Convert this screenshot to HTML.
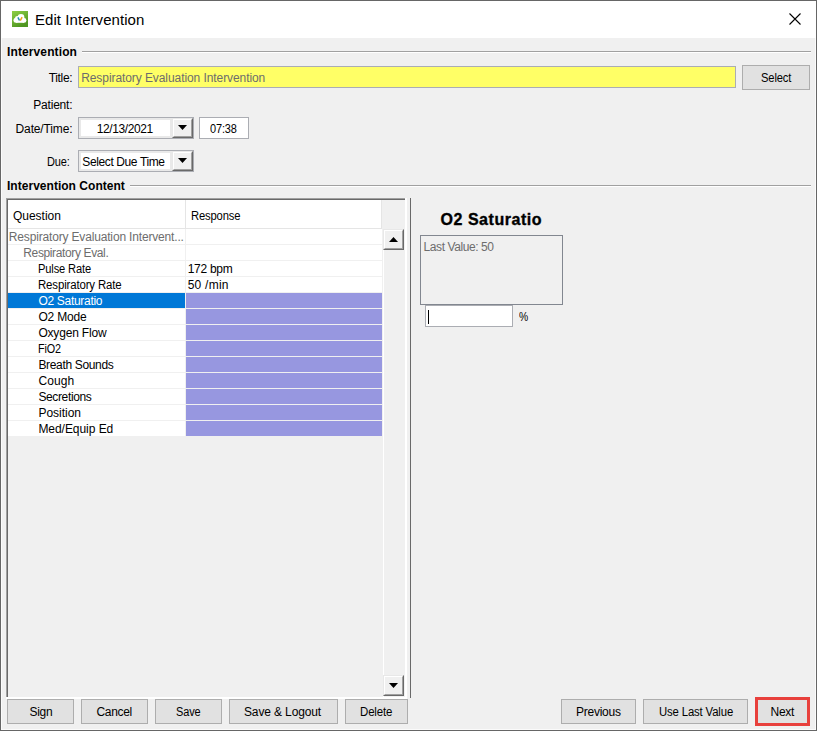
<!DOCTYPE html>
<html><head><meta charset="utf-8"><title>Edit Intervention</title>
<style>
html,body{margin:0;padding:0}
body{width:817px;height:731px;position:relative;overflow:hidden;background:#f0f0f0;font-family:"Liberation Sans",sans-serif;font-size:12px}
.a{position:absolute;box-sizing:border-box}
.t{position:absolute;white-space:nowrap;line-height:20px;height:20px}
.btn{position:absolute;box-sizing:border-box;background:#e1e1e1;border:1px solid #adadad}
.combo{position:absolute;box-sizing:border-box;border:1px solid #abadb3;background:#e9e9e9}
.combo .f{position:absolute;left:2px;top:2px;right:23px;bottom:2px;background:#fff}
.cbtn{position:absolute;box-sizing:border-box;background:#f0f0f0;border-top:1px solid #e8e8e8;border-left:1px solid #e8e8e8;border-right:1px solid #696969;border-bottom:1px solid #696969}
.cbtn:before{content:"";position:absolute;left:0;top:0;right:0;bottom:0;border-top:1px solid #fff;border-left:1px solid #fff;border-right:1px solid #a0a0a0;border-bottom:1px solid #a0a0a0}
.hl{position:absolute;height:1px;background:#f0f0f0}
</style></head><body>
<!-- title bar -->
<div class="a" style="left:0;top:0;width:817px;height:38px;background:#fff"></div>
<!-- app icon -->
<svg class="a" style="left:12px;top:11px" width="16" height="16" viewBox="0 0 16 16">
<defs><linearGradient id="g" x1="0" y1="0" x2="0.5" y2="1"><stop offset="0" stop-color="#8fd045"/><stop offset="1" stop-color="#4f9621"/></linearGradient></defs>
<rect width="16" height="16" fill="url(#g)"/>
<g fill="#fff"><circle cx="9" cy="6.4" r="3.4"/><circle cx="5.4" cy="7.3" r="2.4"/><circle cx="4" cy="9.3" r="2.5"/><circle cx="12" cy="9.4" r="2.4"/><rect x="4" y="7" width="8" height="4.8"/></g>
<path d="M5.9 6.3L7.5 9.5" stroke="#2190a8" stroke-width="1.5" fill="none"/>
<path d="M10.1 6.2L8.3 9.6" stroke="#f3a21e" stroke-width="1.5" fill="none"/>
</svg>
<!-- close X -->
<svg class="a" style="left:788px;top:12px" width="14" height="14" viewBox="0 0 14 14"><path d="M1.5 1.5l11 11M12.5 1.5l-11 11" stroke="#000" stroke-width="1.1" fill="none"/></svg>

<!-- group separators -->
<div class="a" style="left:82px;top:51px;width:729px;height:1px;background:#a0a0a0"></div>
<div class="a" style="left:82px;top:52px;width:729px;height:1px;background:#fff"></div>
<div class="a" style="left:130px;top:185px;width:681px;height:1px;background:#a0a0a0"></div>
<div class="a" style="left:130px;top:186px;width:681px;height:1px;background:#fff"></div>

<!-- title field -->
<div class="a" style="left:78px;top:66px;width:658px;height:22px;background:#ffff66;border:1px solid #abadb3"></div>
<div class="btn" style="left:742px;top:65px;width:68px;height:25px"></div>

<!-- date combo -->
<div class="combo" style="left:78px;top:117px;width:116px;height:22px"><div class="f"></div><div class="cbtn" style="right:0px;top:0px;width:21px;height:20px"></div></div>
<div class="a" style="left:199px;top:117px;width:50px;height:22px;background:#fff;border:1px solid #abadb3"></div>
<!-- due combo -->
<div class="combo" style="left:78px;top:150px;width:116px;height:22px"><div class="f"></div><div class="cbtn" style="right:0px;top:0px;width:21px;height:20px"></div></div>
<svg class="a" style="left:0;top:0" width="817" height="731"><polygon points="178.0,125 187.0,125 182.5,130" fill="#000"/></svg>
<svg class="a" style="left:0;top:0" width="817" height="731"><polygon points="178.0,158 187.0,158 182.5,163" fill="#000"/></svg>

<!-- table -->
<div class="a" style="left:6px;top:198px;width:399px;height:1px;background:#a0a0a0"></div>
<div class="a" style="left:6px;top:198px;width:1px;height:499px;background:#a0a0a0"></div>
<div class="a" style="left:7px;top:199px;width:398px;height:1px;background:#696969"></div>
<div class="a" style="left:7px;top:199px;width:1px;height:498px;background:#696969"></div>
<div class="a" style="left:405px;top:198px;width:2px;height:501px;background:#fff"></div>
<div class="a" style="left:6px;top:697px;width:401px;height:2px;background:#fff"></div>
<!-- white area: header + rows -->
<div class="a" style="left:8px;top:200px;width:374px;height:237px;background:#fff"></div>
<div class="a" style="left:8px;top:228px;width:374px;height:1px;background:#e5e5e5"></div>
<div class="a" style="left:185px;top:200px;width:1px;height:28px;background:#e5e5e5"></div>
<div class="a" style="left:381px;top:200px;width:1px;height:29px;background:#e5e5e5"></div>
<div class="a" style="left:185px;top:229px;width:1px;height:208px;background:#f0f0f0"></div>
<div class="hl" style="left:8px;width:374px;top:244px"></div>
<div class="hl" style="left:8px;width:374px;top:260px"></div>
<div class="hl" style="left:8px;width:374px;top:276px"></div>
<div class="hl" style="left:8px;width:374px;top:292px"></div>
<div class="hl" style="left:8px;width:374px;top:308px"></div>
<div class="hl" style="left:8px;width:374px;top:324px"></div>
<div class="hl" style="left:8px;width:374px;top:340px"></div>
<div class="hl" style="left:8px;width:374px;top:356px"></div>
<div class="hl" style="left:8px;width:374px;top:372px"></div>
<div class="hl" style="left:8px;width:374px;top:388px"></div>
<div class="hl" style="left:8px;width:374px;top:404px"></div>
<div class="hl" style="left:8px;width:374px;top:420px"></div>
<div class="hl" style="left:8px;width:374px;top:436px"></div>
<div class="a" style="left:186px;width:196px;top:293px;height:15px;background:#9797e0"></div>
<div class="a" style="left:186px;width:196px;top:309px;height:15px;background:#9797e0"></div>
<div class="a" style="left:186px;width:196px;top:325px;height:15px;background:#9797e0"></div>
<div class="a" style="left:186px;width:196px;top:341px;height:15px;background:#9797e0"></div>
<div class="a" style="left:186px;width:196px;top:357px;height:15px;background:#9797e0"></div>
<div class="a" style="left:186px;width:196px;top:373px;height:15px;background:#9797e0"></div>
<div class="a" style="left:186px;width:196px;top:389px;height:15px;background:#9797e0"></div>
<div class="a" style="left:186px;width:196px;top:405px;height:15px;background:#9797e0"></div>
<div class="a" style="left:186px;width:196px;top:421px;height:15px;background:#9797e0"></div>
<div class="a" style="left:8px;width:177px;top:293px;height:15px;background:#0078d7"></div>
<!-- scrollbar -->
<div class="a" style="left:383px;top:229px;width:1px;height:468px;background:#fff"></div>
<div class="cbtn" style="left:383px;top:229px;width:21px;height:21px"></div>
<div class="cbtn" style="left:383px;top:675px;width:21px;height:21px"></div>
<svg class="a" style="left:0;top:0" width="817" height="731"><polygon points="389.0,242 398.0,242 393.5,237" fill="#000"/></svg>
<svg class="a" style="left:0;top:0" width="817" height="731"><polygon points="389.0,683 398.0,683 393.5,688" fill="#000"/></svg>
<!-- splitter -->
<div class="a" style="left:410px;top:198px;width:1px;height:500px;background:#696969"></div>

<!-- right panel -->
<div class="a" style="left:420px;top:235px;width:143px;height:70px;border:1px solid #828790"></div>
<div class="a" style="left:425px;top:305px;width:88px;height:22px;background:#fff;border:1px solid #abadb3"></div>
<div class="a" style="left:428px;top:310px;width:1px;height:14px;background:#000"></div>

<!-- bottom buttons -->
<div class="btn" style="left:7px;top:699px;width:67px;height:25px"></div>
<div class="btn" style="left:81px;top:699px;width:67px;height:25px"></div>
<div class="btn" style="left:155px;top:699px;width:67px;height:25px"></div>
<div class="btn" style="left:229px;top:699px;width:109px;height:25px"></div>
<div class="btn" style="left:345px;top:699px;width:63px;height:25px"></div>
<div class="btn" style="left:561px;top:699px;width:75px;height:25px"></div>
<div class="btn" style="left:643px;top:699px;width:105px;height:25px"></div>
<div class="btn" style="left:755px;top:697px;width:55px;height:29px;border:3px solid #e8403c"></div>

<!-- texts -->
<span class="t" style="left:35.00px;top:9.80px;font-size:15px;letter-spacing:0.059px;color:#000;">Edit Intervention</span>
<span class="t" style="left:7.00px;top:41.84px;font-size:12px;letter-spacing:0.114px;color:#000;font-weight:bold;">Intervention</span>
<span class="t" style="left:48.80px;top:67.84px;font-size:12px;letter-spacing:-0.365px;color:#000;">Title:</span>
<span class="t" style="left:81.20px;top:67.84px;font-size:12px;letter-spacing:-0.079px;color:#6d6d6d;">Respiratory Evaluation Intervention</span>
<span class="t" style="left:761.00px;top:67.84px;font-size:12px;letter-spacing:-0.150px;color:#000;transform:scaleX(0.9318);transform-origin:0 0;">Select</span>
<span class="t" style="left:33.30px;top:94.84px;font-size:12px;letter-spacing:-0.208px;color:#000;">Patient:</span>
<span class="t" style="left:15.60px;top:118.84px;font-size:12px;letter-spacing:-0.145px;color:#000;">Date/Time:</span>
<span class="t" style="left:96.80px;top:118.84px;font-size:12px;letter-spacing:-0.409px;color:#000;">12/13/2021</span>
<span class="t" style="left:210.20px;top:118.84px;font-size:12px;letter-spacing:-0.150px;color:#000;transform:scaleX(0.9141);transform-origin:0 0;">07:38</span>
<span class="t" style="left:46.80px;top:151.84px;font-size:12px;letter-spacing:-0.150px;color:#000;transform:scaleX(0.9160);transform-origin:0 0;">Due:</span>
<span class="t" style="left:82.30px;top:151.84px;font-size:12px;letter-spacing:-0.384px;color:#000;">Select Due Time</span>
<span class="t" style="left:7.00px;top:175.84px;font-size:12px;letter-spacing:0.025px;color:#000;font-weight:bold;">Intervention Content</span>
<span class="t" style="left:13.00px;top:205.84px;font-size:12px;letter-spacing:-0.022px;color:#000;">Question</span>
<span class="t" style="left:191.30px;top:205.84px;font-size:12px;letter-spacing:-0.150px;color:#000;transform:scaleX(0.9341);transform-origin:0 0;">Response</span>
<span class="t" style="left:8.80px;top:226.84px;font-size:12px;letter-spacing:-0.165px;color:#6d6d6d;">Respiratory Evaluation Intervent...</span>
<span class="t" style="left:23.30px;top:242.84px;font-size:12px;letter-spacing:-0.371px;color:#6d6d6d;">Respiratory Eval.</span>
<span class="t" style="left:38.40px;top:258.84px;font-size:12px;letter-spacing:-0.150px;color:#000;transform:scaleX(0.9259);transform-origin:0 0;">Pulse Rate</span>
<span class="t" style="left:187.70px;top:258.84px;font-size:12px;letter-spacing:-0.284px;color:#000;">172 bpm</span>
<span class="t" style="left:38.40px;top:274.84px;font-size:12px;letter-spacing:-0.150px;color:#000;transform:scaleX(0.9533);transform-origin:0 0;">Respiratory Rate</span>
<span class="t" style="left:187.70px;top:274.84px;font-size:12px;letter-spacing:0.237px;color:#000;">50 /min</span>
<span class="t" style="left:38.40px;top:290.84px;font-size:12px;letter-spacing:-0.300px;color:#fff;">O2 Saturatio</span>
<span class="t" style="left:38.40px;top:306.84px;font-size:12px;letter-spacing:-0.198px;color:#000;">O2 Mode</span>
<span class="t" style="left:38.40px;top:322.84px;font-size:12px;letter-spacing:-0.176px;color:#000;">Oxygen Flow</span>
<span class="t" style="left:38.40px;top:338.84px;font-size:12px;letter-spacing:-0.150px;color:#000;transform:scaleX(0.9003);transform-origin:0 0;">FiO2</span>
<span class="t" style="left:38.40px;top:354.84px;font-size:12px;letter-spacing:-0.332px;color:#000;">Breath Sounds</span>
<span class="t" style="left:38.40px;top:370.84px;font-size:12px;letter-spacing:0.078px;color:#000;">Cough</span>
<span class="t" style="left:38.40px;top:386.84px;font-size:12px;letter-spacing:-0.366px;color:#000;">Secretions</span>
<span class="t" style="left:38.40px;top:402.84px;font-size:12px;letter-spacing:-0.017px;color:#000;">Position</span>
<span class="t" style="left:38.40px;top:418.84px;font-size:12px;letter-spacing:-0.046px;color:#000;">Med/Equip Ed</span>
<span class="t" style="left:440.50px;top:210.46px;font-size:16px;letter-spacing:0.540px;color:#000;font-weight:bold;-webkit-text-stroke:0.35px #000;">O2 Saturatio</span>
<span class="t" style="left:423.60px;top:236.84px;font-size:12px;letter-spacing:-0.420px;color:#6d6d6d;">Last Value: 50</span>
<span class="t" style="left:519.00px;top:306.84px;font-size:12px;letter-spacing:0.000px;color:#000;transform:scaleX(0.86);transform-origin:0 0;">%</span>
<span class="t" style="left:29.40px;top:701.84px;font-size:12px;letter-spacing:-0.248px;color:#000;">Sign</span>
<span class="t" style="left:96.40px;top:701.84px;font-size:12px;letter-spacing:-0.298px;color:#000;">Cancel</span>
<span class="t" style="left:175.70px;top:701.84px;font-size:12px;letter-spacing:-0.150px;color:#000;transform:scaleX(0.9145);transform-origin:0 0;">Save</span>
<span class="t" style="left:244.00px;top:701.84px;font-size:12px;letter-spacing:-0.133px;color:#000;">Save &amp; Logout</span>
<span class="t" style="left:360.40px;top:701.84px;font-size:12px;letter-spacing:-0.150px;color:#000;transform:scaleX(0.9544);transform-origin:0 0;">Delete</span>
<span class="t" style="left:576.10px;top:701.84px;font-size:12px;letter-spacing:-0.270px;color:#000;">Previous</span>
<span class="t" style="left:658.50px;top:701.84px;font-size:12px;letter-spacing:-0.150px;color:#000;transform:scaleX(0.9446);transform-origin:0 0;">Use Last Value</span>
<span class="t" style="left:770.60px;top:701.84px;font-size:12px;letter-spacing:-0.313px;color:#000;">Next</span>

<!-- window border -->
<div class="a" style="left:1px;top:38px;width:815px;height:692px;border:1px solid #fbfbfb;border-top:none"></div>
<div class="a" style="left:0;top:0;width:817px;height:731px;border:1px solid #666"></div>
</body></html>
